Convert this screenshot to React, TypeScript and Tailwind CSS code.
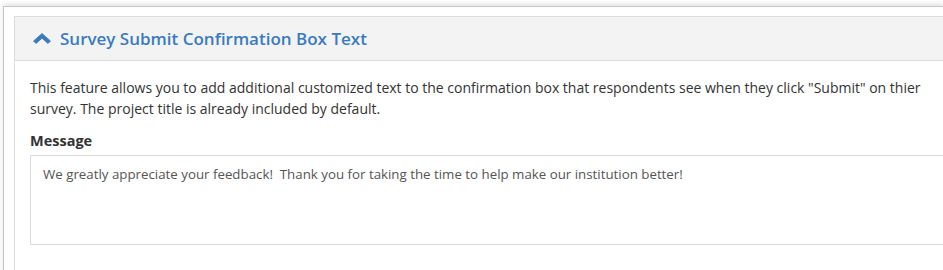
export default function App() {
  return (
    <div className="h-[270px] overflow-hidden bg-white pl-[3px] pt-[6px] font-['Open_Sans',sans-serif]">
      <div className="h-[300px] border-l border-t border-[#c8c8c8] bg-white pl-[10px] pt-[9px] shadow-[0_-2px_5px_rgba(0,0,0,0.12)]">
        <div className="h-[300px] w-[960px] border border-[#dcdcdc]">
          <div className="flex h-[44px] items-center gap-[9px] border-b border-[#dcdcdc] bg-[#f3f3f3] pl-[18px]">
            <svg width="18" height="11" viewBox="0 0 18 11" className="text-[#3a7bbf]">
              <path d="M9 0.5 L17.5 8 L15 10.5 L9 5.2 L3 10.5 L0.5 8 Z" fill="currentColor" strokeLinejoin="round" stroke="currentColor" strokeWidth="0.8" />
            </svg>
            <h2 className="text-[17px] font-semibold text-[#3a7bbf]">
              Survey Submit Confirmation Box Text
            </h2>
          </div>
          <div className="pl-[15px] pt-[16px]">
            <p className="w-[920px] text-[14px] leading-[21px] text-[#333]">
              This feature allows you to add additional customized text to the confirmation box that respondents see when they click "Submit" on thier survey. The project title is already included by default.
            </p>
            <label className="mt-[12px] block text-[14.5px] font-bold leading-[20px] text-[#333]">Message</label>
            <textarea
              className="mt-[4px] block h-[90px] w-[940px] resize-none border border-[#dcdcdc] px-[12px] pt-[8px] text-[13.3px] leading-[20px] text-[#555] outline-none"
              defaultValue="We greatly appreciate your feedback!  Thank you for taking the time to help make our institution better!"
            />
          </div>
        </div>
      </div>
    </div>
  );
}
